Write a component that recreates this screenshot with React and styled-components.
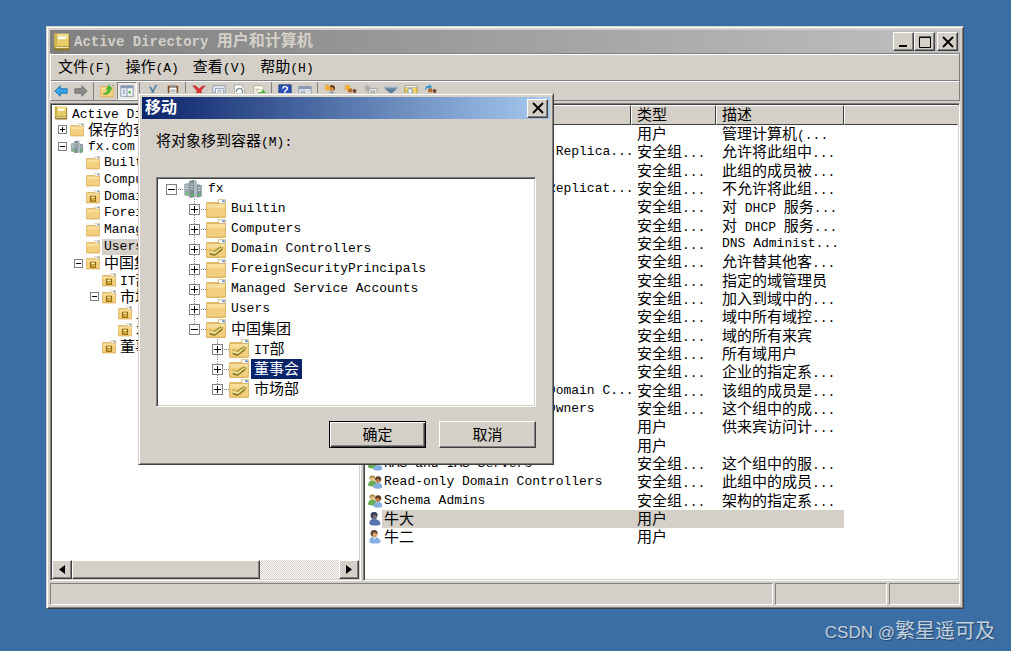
import React from 'react'
import styled, { createGlobalStyle, css } from 'styled-components'

const face = '#d4d0c8'
const mono = `'Liberation Mono', 'Noto Sans CJK SC', monospace`

const menus = ['文件(F)', '操作(A)', '查看(V)', '帮助(H)']

const tools = [
  ['back', 'forward'],
  ['up', 'panel'],
  ['cut', 'paste'],
  ['delete', 'properties', 'refresh', 'export'],
  ['help', 'window'],
  ['newUser', 'newGroup', 'newUnit', 'filter', 'find', 'addMember'],
]

const tree = [
  { label: 'Active Directory 用户和计算机', depth: 0, icon: 'book' },
  { label: '保存的查询', depth: 1, icon: 'folder', toggle: '+' },
  { label: 'fx.com', depth: 1, icon: 'server', toggle: '-' },
  { label: 'Builtin', depth: 2, icon: 'folder' },
  { label: 'Computers', depth: 2, icon: 'folder' },
  { label: 'Domain Controllers', depth: 2, icon: 'unit' },
  { label: 'ForeignSecurityPrincipals', depth: 2, icon: 'folder' },
  { label: 'Managed Service Accounts', depth: 2, icon: 'folder' },
  { label: 'Users', depth: 2, icon: 'folder', selected: true },
  { label: '中国集团', depth: 2, icon: 'unit', toggle: '-' },
  { label: 'IT部', depth: 3, icon: 'unit' },
  { label: '市场部', depth: 3, icon: 'unit', toggle: '-' },
  { label: '上海', depth: 4, icon: 'unit' },
  { label: '北京', depth: 4, icon: 'unit' },
  { label: '董事会', depth: 3, icon: 'unit' },
]

const targets = [
  { label: 'fx', depth: 0, icon: 'server', toggle: '-' },
  { label: 'Builtin', depth: 1, icon: 'folder', toggle: '+' },
  { label: 'Computers', depth: 1, icon: 'folder', toggle: '+' },
  { label: 'Domain Controllers', depth: 1, icon: 'openUnit', toggle: '+' },
  { label: 'ForeignSecurityPrincipals', depth: 1, icon: 'folder', toggle: '+' },
  { label: 'Managed Service Accounts', depth: 1, icon: 'folder', toggle: '+' },
  { label: 'Users', depth: 1, icon: 'folder', toggle: '+' },
  { label: '中国集团', depth: 1, icon: 'openUnit', toggle: '-', last: true },
  { label: 'IT部', depth: 2, icon: 'openUnit', toggle: '+' },
  { label: '董事会', depth: 2, icon: 'openUnit', toggle: '+', selected: true },
  { label: '市场部', depth: 2, icon: 'openUnit', toggle: '+', last: true },
]

const group = '安全组...'
const user = '用户'
const rows = [
  ['Administrator', user, '管理计算机(...'],
  ['Allowed RODC Password Replica...', group, '允许将此组中...'],
  ['Cert Publishers', group, '此组的成员被...'],
  ['Denied RODC Password Replicat...', group, '不允许将此组...'],
  ['DHCP Administrators', group, '对 DHCP 服务...'],
  ['DHCP Users', group, '对 DHCP 服务...'],
  ['DnsAdmins', group, 'DNS Administ...'],
  ['DnsUpdateProxy', group, '允许替其他客...'],
  ['Domain Admins', group, '指定的域管理员'],
  ['Domain Computers', group, '加入到域中的...'],
  ['Domain Controllers', group, '域中所有域控...'],
  ['Domain Guests', group, '域的所有来宾'],
  ['Domain Users', group, '所有域用户'],
  ['Enterprise Admins', group, '企业的指定系...'],
  ['Enterprise Read-only Domain C...', group, '该组的成员是...'],
  ['Group Policy Creator Owners', group, '这个组中的成...'],
  ['Guest', user, '供来宾访问计...'],
  ['krbtgt', user, ''],
  ['RAS and IAS Servers', group, '这个组中的服...'],
  ['Read-only Domain Controllers', group, '此组中的成员...'],
  ['Schema Admins', group, '架构的指定系...'],
  ['牛大', user, ''],
  ['牛二', user, ''],
]

/* Chinese runs are set larger than the Latin ones around them */
const Text = ({ children, size = 15 }) =>
  children
    .split(/([\u3400-\u9fff]+)/)
    .filter(Boolean)
    .map((run, i) =>
      /[\u3400-\u9fff]/.test(run) ? (
        <Han key={i} $size={size}>
          {run}
        </Han>
      ) : (
        run
      )
    )

const folderBack = (
  <>
    <path d="M.5 2.500h9l1-1.500h5v14H.5z" fill="#d9a94c" />
    <path d="M.5 3.500h15v11H.5z" fill="#f3d080" stroke="#dcb05a" strokeWidth=".7" />
    <path d="M1 4h14v3H1z" fill="#fadf9c" />
    <path d="M10 .5h5.500v3H10z" fill="#fff" stroke="#c9a45a" strokeWidth=".5" />
    <path d="M13 1h2v1.500h-2z" fill="#5b8fd0" />
  </>
)

const worker = (
  <>
    <circle cx="9" cy="5" r="3.400" fill="#c98d4d" />
    <path d="M6 3q3-4 6.500 0v4l-2-3z" fill="#5b3418" />
    <path d="M4 15q0-6 5-6t5.500 6z" fill="#5a86c4" />
  </>
)

const spark = (
  <path d="M4 0l1 2.500 2.500-.5L6 4l1.500 2L5 5.700 4 8 3 5.700.5 6 2 4 .5 2 3 2.500z" fill="#fbb52c" stroke="#e08b12" strokeWidth=".4" />
)

const pair = (
  <>
    <circle cx="7" cy="7" r="2.500" fill="#b06a30" />
    <path d="M4 14q0-5 3-5t3 5z" fill="#d59b55" />
    <circle cx="12" cy="8" r="2.200" fill="#754422" />
    <path d="M9 14q0-4 3-4t3 4z" fill="#999" />
  </>
)

const shapes = {
  book: (
    <>
      <path d="M1 1h13l1 1v13.500H2l-1-1z" fill="#8d7526" />
      <path d="M1 .5h13v11.500H1z" fill="#e5cd68" />
      <path d="M1 .5h2.500v11.500H1z" fill="#cdb14a" />
      <path d="M4 1h9.500v4H4z" fill="#f2e39b" />
      <path d="M4.500 3.500H11v2H4.500z" fill="#fff" />
      <path d="M2 12.500h12v1H2z" fill="#f6edc4" />
    </>
  ),
  folder: folderBack,
  unit: (
    <>
      {folderBack}
      <path d="M4.500 6.500h7V13.500h-7z" fill="#94690c" />
      <path d="M6 7.500h4v2H6z" fill="#fff3b8" />
      <path d="M6 10.500h4.500V12H6z" fill="#f2cf50" />
    </>
  ),
  openUnit: (
    <>
      {folderBack}
      <path d="M3 9.500l2.500 1L12 6l2 .5-1.500 3L7 13.500l-4-1z" fill="#94802a" />
      <path d="M3 9.500l3.500 1.200L12.500 6.500l1 .3L7 12l-4-1.200z" fill="#f9f1b4" />
      <path d="M2.500 8.500l3.500 1 5.500-3.500" fill="none" stroke="#bda83b" strokeWidth=".8" />
    </>
  ),
  server: (
    <>
      <path d="M1 4l4-1v11l-4-1z" fill="#9aa9ad" />
      <path d="M5 1.500L9 .5v14l-4 .5z" fill="#7a8a8f" />
      <path d="M9 .5l2 1V14l-2 1z" fill="#a9b8bb" />
      <path d="M11 4l4 1v9l-4 1z" fill="#84959a" />
      <path d="M2 5.500h2M2 7.500h2M6 4h2M6 6h2M6 8h2M12 7h2M12 9h2" stroke="#d7e2e4" strokeWidth=".8" />
      <path d="M2.500 11h1.500v1.500H2.500zM6.500 12H8v1.500H6.500zM12.500 12H14v1.500h-1.500z" fill="#4bd04b" />
    </>
  ),
  user: (
    <>
      <circle cx="7" cy="5" r="3.500" fill="#d9a56c" />
      <path d="M3 5q-.5-5 4-5t4 5Q9 2.500 6 3q-1 2-.5 4Q3.500 7 3 5z" fill="#5e452d" />
      <path d="M1.500 13q0-5 5.500-5t7.500 5q-1 2.500-6.500 2.500T1.500 13z" fill="#82aee0" />
      <path d="M6 8.500L7.500 11 9 8.500z" fill="#fff" />
    </>
  ),
  pickedUser: (
    <>
      <circle cx="7" cy="5" r="3.500" fill="#7c6b76" />
      <path d="M3 5q-.5-5 4-5t4 5Q9 2.500 6 3q-1 2-.5 4Q3.500 7 3 5z" fill="#343b57" />
      <path d="M1.500 13q0-5 5.500-5t7.500 5q-1 2.500-6.500 2.500T1.500 13z" fill="#5675b0" />
    </>
  ),
  group: (
    <>
      <circle cx="5" cy="4" r="3.200" fill="#e6c08a" />
      <path d="M1.500 4.500Q1.500 0 5 .5q3.500 0 3.500 3L5 2.500z" fill="#a58b3c" />
      <path d="M0 12q0-5.500 5-5.500t5 5.500q-5 2.500-10 0z" fill="#68ad4f" />
      <circle cx="11.500" cy="6" r="3" fill="#b87a4c" />
      <path d="M8 6q0-4.500 3.500-4.500 4.500 0 3.500 5.500L11.500 4z" fill="#5b3a20" />
      <path d="M6 14.500Q6 9 11.500 9t4.500 5.500q-4.500 2.500-10 0z" fill="#82aee0" />
    </>
  ),
  back: <path d="M1 8l6-6v3.500h8v5H7V14z" fill="#35a4ea" stroke="#1668b0" />,
  forward: <path d="M15 8L9 2v3.500H1v5h8V14z" fill="#8c8c8c" stroke="#6c6c6c" />,
  up: (
    <>
      {folderBack}
      <path d="M4 11q5-1 5-5H7l3.500-5L14 6h-2q0 6-8 6z" fill="#47c32d" stroke="#2b8d1b" strokeWidth=".5" />
    </>
  ),
  panel: (
    <>
      <path d="M1 2h14v12H1z" fill="#fff" stroke="#7989a0" />
      <path d="M1 2h14v3H1z" fill="#8a99b4" />
      <path d="M3 7h3M3 9h3M3 11h3M8 5v9" stroke="#6b7ca0" />
      <path d="M12 7v5L9 9.500z" fill="#35b135" />
    </>
  ),
  cut: (
    <>
      <path d="M12 1L6.500 11M4.500 3l4 7" stroke="#4e7fa8" strokeWidth="1.800" />
      <circle cx="5" cy="12.500" r="2" fill="none" stroke="#444" />
      <circle cx="10" cy="12.500" r="2" fill="none" stroke="#444" />
    </>
  ),
  paste: (
    <>
      <path d="M2 2h12v13H2z" fill="#80502c" />
      <path d="M4 4h8v10H4z" fill="#fff" />
      <path d="M5 1h6v3H5z" fill="#999" />
      <path d="M5 7h6M5 9h6" stroke="#888" />
    </>
  ),
  delete: <path d="M1 2q3-1 7 4 3-4 7-4l-5 6 4 6q-4 0-6-4-3 4-6 4l4-6z" fill="#e23232" stroke="#a81515" strokeWidth=".6" />,
  properties: (
    <>
      <path d="M1 2h14v8H1z" fill="#eef2f7" stroke="#8293ad" />
      <path d="M4 5h9v9H4z" fill="#fff" stroke="#8293ad" />
      <path d="M6 7h5M6 9h5" stroke="#8293ad" />
    </>
  ),
  refresh: (
    <>
      <path d="M3 1h7l4 4v10H3z" fill="#fff" stroke="#a2a2a2" />
      <path d="M5 9q0-4 4-4 3 0 3 4t-3 4" fill="none" stroke="#7c8d96" strokeWidth="1.500" />
    </>
  ),
  export: (
    <>
      <path d="M2 2h9l2 2v10H2z" fill="#fffdf0" stroke="#aaa58c" />
      <path d="M4 6h5M4 8h3" stroke="#aaa58c" />
      <path d="M7 9h4V6l5 4-5 4v-2H7z" fill="#45b52d" />
    </>
  ),
  help: (
    <>
      <path d="M1 1h14v14H1z" fill="#2c50b8" stroke="#173580" />
      <path d="M5.500 5.500q0-3 3-2.500 3 .5 2 3L8 8v2M8 11.500V13" fill="none" stroke="#fff" strokeWidth="1.600" />
    </>
  ),
  window: (
    <>
      <path d="M1 3h14v11H1z" fill="#f3f5f8" stroke="#7989a0" />
      <path d="M1 3h14v3H1z" fill="#8a99b4" />
      <path d="M3 8h6M3 10h6M11 8h2" stroke="#7989a0" />
    </>
  ),
  newUser: (
    <>
      {worker}
      {spark}
    </>
  ),
  newGroup: (
    <>
      {pair}
      {spark}
    </>
  ),
  newUnit: (
    <>
      <path d="M5 5h10v7H5z" fill="#eee" stroke="#999" />
      <path d="M7 8h6M7 10h6" stroke="#888" />
      <path d="M4 0l1 3 3-1-2 3 2 3-3-1-1 2-1-2-3 1 2-3-2-3 3 1z" fill="#aaa" />
    </>
  ),
  filter: (
    <>
      <path d="M0 4h16l-6 6v5H6v-5z" fill="#5f7f9e" />
      <path d="M0 3h16v2H0z" fill="#98b4cb" />
    </>
  ),
  find: (
    <>
      <path d="M1 2h14v12H1z" fill="#f3d465" stroke="#b08c28" />
      <path d="M1 2h14v2H1z" fill="#fff" stroke="#8293ad" strokeWidth=".5" />
      <circle cx="7" cy="8" r="3" fill="#dcebf5" stroke="#7890a4" />
    </>
  ),
  addMember: (
    <>
      {pair}
      <path d="M1 7q0-5 5-5V0l3 3-3 3V4Q3 4 1 7z" fill="#3193d8" />
    </>
  ),
}

const Icon = ({ name, size = 16 }) => (
  <Glyph width={size} height={size} viewBox="0 0 16 16" aria-hidden="true">
    {shapes[name]}
  </Glyph>
)

const Toggle = ({ sign, size }) => (
  <Glyph width={size} height={size} viewBox={`0 0 ${size} ${size}`} aria-hidden="true">
    <rect x=".5" y=".5" width={size - 1} height={size - 1} fill="#fff" stroke="#808080" />
    <path
      d={`M2 ${size / 2}h${size - 4}${sign === '+' ? `M${size / 2} 2v${size - 4}` : ''}`}
      stroke="#000"
    />
  </Glyph>
)

/* Dotted guide lines with the expander box on top */
const Branch = ({ sign, root, last }) => (
  <Glyph width="23" height="20" viewBox="0 0 23 20" aria-hidden="true">
    <path d="M12 10.500h11" stroke="#808080" strokeDasharray="1 1" />
    {!root && <path d={last ? 'M11.500 0v10' : 'M11.500 0v20'} stroke="#808080" strokeDasharray="1 1" />}
    <rect x="6.500" y="5.500" width="10" height="10" fill="#fff" stroke="#808080" />
    <path d={`M8 10.500h7${sign === '+' ? 'M11.500 7v7' : ''}`} stroke="#000" />
  </Glyph>
)

const Cross = () => (
  <Glyph width="12" height="12" viewBox="0 0 12 12" aria-hidden="true">
    <path d="M1 1l10 10M11 1L1 11" stroke="#000" strokeWidth="1.800" />
  </Glyph>
)

const MoveDialog = () => (
  <Dialog role="dialog" aria-labelledby="move-title">
    <TitleBar $active>
      <Title id="move-title">
        <Text size={16}>移动</Text>
      </Title>
      <CaptionButton aria-label="关闭">
        <Cross />
      </CaptionButton>
    </TitleBar>
    <DialogBody>
      <Prompt id="move-prompt">
        <Text>将对象移到容器(M):</Text>
      </Prompt>
      <TargetTree role="tree" aria-labelledby="move-prompt">
        {targets.map(t => (
          <TargetRow key={t.label} role="treeitem" $depth={t.depth}>
            <Branch sign={t.toggle} root={t.depth === 0} last={t.last} />
            <Icon name={t.icon} size={20} />
            <TargetLabel $selected={t.selected}>
              <Text>{t.label}</Text>
            </TargetLabel>
          </TargetRow>
        ))}
      </TargetTree>
      <Actions>
        <PushButton $primary>
          <Text>确定</Text>
        </PushButton>
        <PushButton>
          <Text>取消</Text>
        </PushButton>
      </Actions>
    </DialogBody>
  </Dialog>
)

const NavTree = () => (
  <Pane>
    <NavList role="tree">
      {tree.map(n => (
        <NavRow key={n.label} role="treeitem" $depth={n.depth}>
          {n.depth > 0 && <ToggleCell>{n.toggle && <Toggle sign={n.toggle} size={9} />}</ToggleCell>}
          <Icon name={n.icon} size={14} />
          <NavLabel $selected={n.selected}>
            <Text>{n.label}</Text>
          </NavLabel>
        </NavRow>
      ))}
    </NavList>
    <ScrollBar>
      <ScrollButton aria-label="向左">
        <Glyph width="6" height="9" viewBox="0 0 6 9">
          <path d="M6 0v9L0 4.500z" />
        </Glyph>
      </ScrollButton>
      <ScrollThumb />
      <ScrollTrack />
      <ScrollButton aria-label="向右">
        <Glyph width="6" height="9" viewBox="0 0 6 9">
          <path d="M0 0v9l6-4.500z" />
        </Glyph>
      </ScrollButton>
    </ScrollBar>
  </Pane>
)

const iconFor = (type, selected) => {
  if (type !== user) return 'group'
  return selected ? 'pickedUser' : 'user'
}

const ObjectList = () => (
  <Pane>
    <Table>
      <colgroup>
        <Col $width={266} />
        <Col $width={85} />
        <Col $width={128} />
        <col />
      </colgroup>
      <thead>
        <tr>
          {['名称', '类型', '描述'].map(h => (
            <HeadCell key={h}>
              <Text>{h}</Text>
            </HeadCell>
          ))}
          <HeadCell aria-hidden="true" />
        </tr>
      </thead>
      <tbody>
        {rows.map(([name, type, about]) => {
          const selected = name === '牛大'
          return (
            <Row key={name}>
              <NameCell>
                <Name>
                  <Icon name={iconFor(type, selected)} size={14} />
                  <NameLabel $selected={selected}>
                    <Text>{name}</Text>
                  </NameLabel>
                </Name>
              </NameCell>
              <Cell $selected={selected}>
                <Text>{type}</Text>
              </Cell>
              <Cell $selected={selected}>
                <Text>{about}</Text>
              </Cell>
              <td />
            </Row>
          )
        })}
      </tbody>
    </Table>
  </Pane>
)

export default function App() {
  return (
    <Desktop>
      <GlobalStyle />
      <Window>
        <TitleBar>
          <Icon name="book" size={18} />
          <Title>
            <Text size={16}>Active Directory 用户和计算机</Text>
          </Title>
          <CaptionButton aria-label="最小化">
            <Glyph width="12" height="12" viewBox="0 0 12 12">
              <path d="M1 10h8" stroke="#000" strokeWidth="2" />
            </Glyph>
          </CaptionButton>
          <CaptionButton aria-label="最大化">
            <Glyph width="12" height="12" viewBox="0 0 12 12">
              <path d="M.5 1.500h11v10H.5zM0 1h12" fill="none" stroke="#000" />
            </Glyph>
          </CaptionButton>
          <CaptionButton $apart aria-label="关闭">
            <Cross />
          </CaptionButton>
        </TitleBar>
        <Bars>
          <MenuBar>
            {menus.map(m => (
              <MenuButton key={m}>
                <Text>{m}</Text>
              </MenuButton>
            ))}
          </MenuBar>
          <ToolBar>
            {tools.map((set, i) => (
              <ToolGroup key={i}>
                {set.map(name => (
                  <ToolButton key={name} aria-label={name} $pressed={name === 'panel'}>
                    <Icon name={name} size={14} />
                  </ToolButton>
                ))}
              </ToolGroup>
            ))}
          </ToolBar>
        </Bars>
        <Panes>
          <NavTree />
          <ObjectList />
        </Panes>
        <StatusBar>
          <StatusCell />
          <StatusCell />
          <StatusCell />
        </StatusBar>
        <MoveDialog />
      </Window>
      <Watermark>
        <Text size={20}>CSDN @繁星遥可及</Text>
      </Watermark>
    </Desktop>
  )
}

const GlobalStyle = createGlobalStyle`
  * {
    box-sizing: border-box;
  }

  body {
    margin: 0;
    background: #3a6ea5;
    color: #000;
    font-family: ${mono};
    font-size: 13px;
    line-height: 14px;
  }

  button {
    padding: 0;
    color: inherit;
    font: inherit;
  }
`

const raised = css`
  background: ${face};
  border: 1px solid;
  border-color: #fff #404040 #404040 #fff;
  box-shadow: inset -1px -1px #808080;
`

const frame = css`
  background: ${face};
  border: 1px solid;
  border-color: ${face} #404040 #404040 ${face};
  box-shadow: inset 1px 1px #fff, inset -1px -1px #808080;
  padding: 3px;
`

const sunken = css`
  background: #fff;
  border: 1px solid;
  border-color: #808080 #fff #fff #808080;
  box-shadow: inset 1px 1px #404040, inset -1px -1px ${face};
`

const Han = styled.span`
  font-family: 'Noto Sans CJK SC', sans-serif;
  font-size: ${p => p.$size}px;
  line-height: 1;
`

const Glyph = styled.svg`
  display: block;
  flex: none;
`

const Desktop = styled.div`
  position: relative;
  display: flex;
  flex-direction: column;
  min-height: 100vh;
  padding: 26px 47px 42px 46px;
`

const Window = styled.main`
  ${frame}
  position: relative;
  display: flex;
  flex: 1;
  flex-direction: column;
`

const TitleBar = styled.header`
  display: flex;
  align-items: center;
  height: ${p => (p.$active ? 22 : 23)}px;
  padding: 0 2px 0 3px;
  color: ${p => (p.$active ? '#fff' : face)};
  background: ${p =>
    p.$active
      ? 'linear-gradient(90deg, #0a246a, #a6caf0)'
      : 'linear-gradient(90deg, #808080, #c0c0c0)'};
`

const Title = styled.h1`
  flex: 1;
  margin: 0;
  font-size: 14px;
  font-weight: bold;
  line-height: 20px;

  svg + & {
    padding-left: 3px;
  }
`

const CaptionButton = styled.button`
  ${raised}
  display: flex;
  align-items: center;
  justify-content: center;
  width: 21px;
  height: 19px;
  margin-left: ${p => (p.$apart ? 2 : 0)}px;
`

const Bars = styled.div`
  border: 1px solid #808080;
  border-left-color: #fff;
  box-shadow: inset 0 1px #fff;
`

const MenuBar = styled.nav`
  display: flex;
  gap: 14px;
  height: 27px;
  padding: 0 7px;
  border-bottom: 1px solid #808080;
`

const MenuButton = styled.button`
  border: 0;
  background: none;
`

const ToolBar = styled.div`
  display: flex;
  height: 19px;
  border-top: 1px solid #fff;
`

const ToolGroup = styled.div`
  display: flex;

  & + & {
    margin-left: 2px;
    padding-left: 3px;
    border-left: 1px solid #808080;
  }
`

const ToolButton = styled.button`
  display: flex;
  align-items: center;
  justify-content: center;
  width: 20px;
  border: 1px solid transparent;
  background: none;

  ${p =>
    p.$pressed &&
    css`
      background: #ece9e4;
      border-color: #808080 #fff #fff #808080;
    `}
`

const Panes = styled.div`
  display: grid;
  flex: 1;
  grid-template-columns: 311px 1fr;
  gap: 2px;
  margin-top: 2px;
`

const Pane = styled.section`
  ${sunken}
  display: flex;
  flex-direction: column;
  min-width: 0;
  padding: 1px;
  overflow: hidden;
`

const NavList = styled.ul`
  flex: 1;
  margin: 0;
  padding: 0;
  list-style: none;
`

const NavRow = styled.li`
  display: flex;
  align-items: center;
  height: 17px;
  padding-left: ${p => 2 + Math.max(p.$depth - 1, 0) * 16}px;
  white-space: nowrap;

  &:nth-child(3n + 1) {
    height: 16px;
  }
`

const ToggleCell = styled.span`
  display: flex;
  justify-content: center;
  width: 16px;
`

const NavLabel = styled.span`
  margin-left: 2px;
  padding: ${p => (p.$selected ? 1 : 0)}px 2px;
  background: ${p => (p.$selected ? face : 'none')};
`

const ScrollBar = styled.div`
  display: flex;
  height: 19px;
`

const ScrollButton = styled.button`
  ${raised}
  display: flex;
  align-items: center;
  justify-content: center;
  width: 20px;
`

const ScrollThumb = styled.div`
  ${raised}
  width: 188px;
`

const ScrollTrack = styled.div`
  flex: 1;
  background: repeating-conic-gradient(#fff 0 25%, ${face} 0 50%) 0 0 / 2px 2px;
`

const Table = styled.table`
  width: 100%;
  table-layout: fixed;
  border-collapse: separate;
  border-spacing: 0;
`

const Col = styled.col`
  width: ${p => p.$width}px;
`

const HeadCell = styled.th`
  height: 20px;
  padding: 0 5px;
  background: ${face};
  border: 1px solid;
  border-color: #fff #404040 #404040 #fff;
  font-weight: normal;
  text-align: left;

  &:last-child {
    border-right-color: ${face};
  }
`

const Row = styled.tr`
  --row: 18px;
  height: var(--row);

  &:nth-child(3n) {
    --row: 19px;
  }
`

const Cell = styled.td`
  padding: 0 6px;
  overflow: hidden;
  white-space: nowrap;
  background: ${p => (p.$selected ? face : 'none')};
`

const NameCell = styled.td`
  padding: 0;
`

const Name = styled.div`
  display: flex;
  align-items: center;
  height: var(--row);
  padding-left: 3px;
`

const NameLabel = styled.span`
  flex: 1;
  padding-left: 2px;
  white-space: nowrap;
  background: ${p => (p.$selected ? face : 'none')};
`

const StatusBar = styled.footer`
  display: grid;
  grid-template-columns: 1fr 112px 71px;
  gap: 2px;
  height: 22px;
  margin-top: 2px;
`

const StatusCell = styled.div`
  border: 1px solid;
  border-color: #808080 #fff #fff #808080;
`

const Dialog = styled.section`
  ${frame}
  position: absolute;
  top: 66px;
  left: 91px;
  width: 416px;
`

const DialogBody = styled.div`
  padding: 13px 14px;
`

const Prompt = styled.p`
  height: 18px;
  margin: 0 0 27px;
`

const TargetTree = styled.ul`
  ${sunken}
  min-height: 230px;
  margin: 0;
  padding: 1px;
  list-style: none;
`

const TargetRow = styled.li`
  display: flex;
  align-items: center;
  height: 20px;
  padding-left: ${p => 2 + p.$depth * 23}px;
`

const TargetLabel = styled.span`
  margin-left: 2px;
  padding: 1px 3px;
  color: ${p => (p.$selected ? '#fff' : '#000')};
  background: ${p => (p.$selected ? '#0a246a' : 'none')};
`

const Actions = styled.div`
  display: flex;
  justify-content: flex-end;
  gap: 13px;
  margin-top: 14px;
`

const PushButton = styled.button`
  ${raised}
  width: 97px;
  height: 27px;

  ${p =>
    p.$primary &&
    css`
      border-color: #000;
      box-shadow: inset 1px 1px #fff, inset -1px -1px #404040, inset -2px -2px #808080;
    `}
`

const Watermark = styled.div`
  position: absolute;
  right: 16px;
  bottom: 6px;
  color: #c3d0de;
  font-family: 'Liberation Sans', sans-serif;
  font-size: 17px;
  line-height: 24px;
  text-shadow: 1px 1px 1px #24466c;
`
